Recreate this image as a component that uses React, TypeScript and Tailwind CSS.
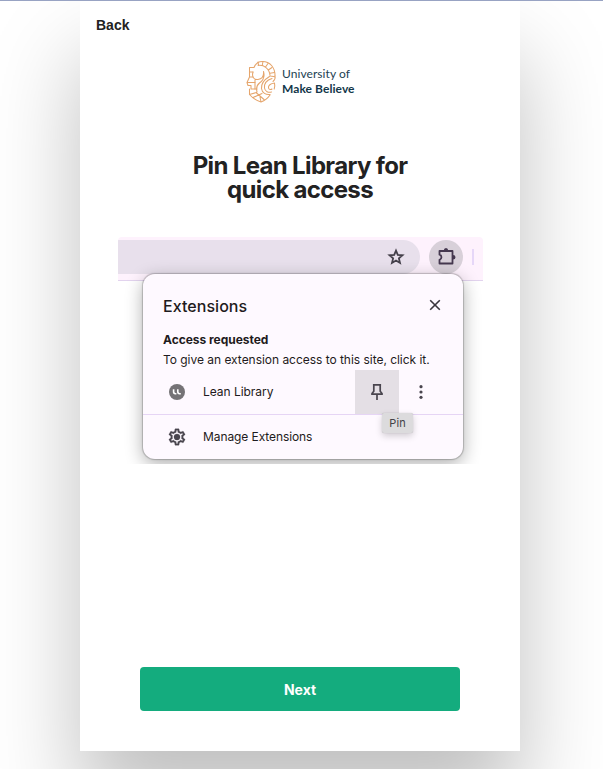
import React from "react";

function Crest() {
  return (
    <svg width="32" height="44" viewBox="0 0 32 44" fill="none" stroke="#e5a56c" strokeWidth="1.05" strokeLinejoin="round" strokeLinecap="round" className="shrink-0">
      <path d="M9 8.500H4.500v4.500H8M9 8.500C10.500 4.500 13.500 2.500 17.500 2.500c7.500 0 12.500 6 12.500 14" />
      <path d="M4.500 13v5H8M4.500 18L2 23.500h8M2 23.500l1 3h3v3.500h6M4.500 30v5.500c2.500 3 7 6 11.500 7.500 4-1.500 7-4 9-7M4.500 35.500l7-2M8 38.500l9-4M11 33.500l8 7M16 43l-1-5" />
      <path d="M13 6.500c6-1 11.500 3.500 12 10M13 2.900l.5 3.600M18 2.500l-.8 4M23 4.500l-2.500 3.500M27 8.500l-3.700 2.500M29.500 13.500l-4.500.8M25.300 17l4.500.8M30 17c.5 2-.3 4-2 5.500" />
      <path d="M8 13c-1.500 5 1 8 5 7.500 4-.6 6-3.500 5.500-8M10 21v9M18.500 12.500c1.500 5-.5 9-4 11.500-2.500 2-3.500 5-2.500 9" />
      <path d="M29.500 24c-4 .5-6.500 2.500-6 5 .4 1.800 2.500 1.800 3.500 1M27 19.500c-5 1.500-8 5-7.500 9.500.5 3.500 4 5 7 4M24.500 17.500c-5 3-8.500 7-8 12 .5 4.500 4.500 6.500 8.500 6M29.500 24c.5 2 .3 4-.3 6" />
    </svg>
  );
}

function StarIcon() {
  return (
    <svg width="18" height="18" viewBox="0 0 18 18" fill="none" stroke="#45414b" strokeWidth="1.8" strokeLinejoin="miter">
      <path d="M9 2.600l1.800 4.300 4.700.4-3.600 3.100 1.100 4.600L9 12.600 5 15l1.100-4.600-3.600-3.100 4.700-.4z" />
    </svg>
  );
}

function PuzzleIcon() {
  return (
    <svg width="20" height="20" viewBox="0 0 20 20">
      <path d="M3.500 4h13v12.500h-13v-3.700c2.600-.7 2.600-4.400 0-5.100z" fill="none" stroke="#45384f" strokeWidth="1.800" strokeLinejoin="round" />
      <path d="M7.800 3.500a2.200 2.500 0 0 1 4.400 0zM17 8a2.500 2.300 0 0 1 0 4.600z" fill="#45384f" />
    </svg>
  );
}

function CloseIcon() {
  return (
    <svg width="12" height="12" viewBox="0 0 12 12" stroke="#39353d" strokeWidth="1.600">
      <path d="M1.200 1.200l9.600 9.600M10.800 1.200l-9.600 9.600" />
    </svg>
  );
}

function LibraryIcon() {
  return (
    <svg width="16" height="16" viewBox="0 0 16 16">
      <circle cx="8" cy="8" r="8" fill="#757376" />
      <path d="M4.600 5.300v2.500c0 1.300.6 1.900 1.800 1.900h1M8.800 5.300v2.500c0 1.300.6 1.900 1.800 1.900h1.200" fill="none" stroke="#fff" strokeWidth="1.600" />
    </svg>
  );
}

function GearIcon() {
  return (
    <svg width="20" height="20" viewBox="0 0 24 24" fill="#49454e" stroke="#49454e" strokeWidth="0.3">
      <path d="M19.430 12.980c.04-.32.07-.64.07-.98 0-.34-.03-.66-.07-.98l2.110-1.650c.19-.15.24-.42.12-.64l-2-3.460c-.09-.16-.26-.25-.44-.25-.06 0-.12.01-.17.03l-2.490 1c-.52-.4-1.080-.73-1.690-.98l-.38-2.650C14.460 2.180 14.250 2 14 2h-4c-.25 0-.46.18-.49.42l-.38 2.650c-.61.25-1.170.59-1.690.98l-2.490-1c-.06-.02-.12-.03-.18-.03-.17 0-.34.09-.43.25l-2 3.460c-.13.22-.07.49.12.64l2.110 1.650c-.04.32-.07.65-.07.98 0 .33.03.66.07.98l-2.110 1.650c-.19.15-.24.42-.12.64l2 3.460c.09.16.26.25.44.25.06 0 .12-.01.17-.03l2.490-1c.52.4 1.080.73 1.690.98l.38 2.650c.03.24.24.42.49.42h4c.25 0 .46-.18.49-.42l.38-2.650c.61-.25 1.170-.59 1.690-.98l2.490 1c.06.02.12.03.18.03.17 0 .34-.09.43-.25l2-3.460c.12-.22.07-.49-.12-.64l-2.110-1.650zm-1.980-1.710c.04.31.05.52.05.73 0 .21-.02.43-.05.73l-.14 1.130.89.7 1.080.84-.7 1.210-1.270-.51-1.040-.42-.9.68c-.43.32-.84.56-1.250.73l-1.060.43-.16 1.130-.2 1.350h-1.400l-.19-1.350-.16-1.130-1.060-.43c-.43-.18-.83-.41-1.230-.71l-.91-.7-1.060.43-1.270.51-.7-1.210 1.080-.84.89-.7-.14-1.130c-.03-.31-.05-.54-.05-.74s.02-.43.05-.73l.14-1.130-.89-.7-1.080-.84.7-1.210 1.270.51 1.040.42.9-.68c.43-.32.84-.56 1.250-.73l1.060-.43.16-1.130.2-1.350h1.390l.19 1.350.16 1.130 1.060.43c.43.18.83.41 1.230.71l.91.7 1.060-.43 1.270-.51.7 1.210-1.070.85-.89.7.14 1.130z" />
      <circle cx="12" cy="12" r="3.700" />
    </svg>
  );
}

function PinIcon() {
  return (
    <svg width="14" height="18" viewBox="0 0 14 18" fill="none" stroke="#49454e" strokeWidth="1.700">
      <path d="M3.800 1.900v6.300L2 10.500v.7h10v-.7l-1.800-2.300V1.900M2.900 1.900h8.200M7 11v6" />
    </svg>
  );
}

function MoreIcon() {
  return (
    <svg width="4" height="14" viewBox="0 0 4 14" fill="#49454e">
      <circle cx="2" cy="1.700" r="1.600" />
      <circle cx="2" cy="7" r="1.600" />
      <circle cx="2" cy="12.300" r="1.600" />
    </svg>
  );
}

function ExtensionsMenu() {
  return (
    <div className="relative ml-[25px] -mt-[7px] h-[185px] w-[320px] rounded-[12px] bg-[#fef9ff] text-[#1e1b20] shadow-[0_0_1px_0.5px_rgba(0,0,0,0.2),0_5px_18px_rgba(0,0,0,0.32)]">
      <div className="flex h-[56px] items-end justify-between pr-[22px] pl-5">
        <h2 className="mb-[12px] text-[16px] leading-[24px] font-medium tracking-[0.05px]">Extensions</h2>
        <div className="mb-[19px]"><CloseIcon /></div>
      </div>
      <div className="h-[40px] pl-5">
        <p className="text-[12px] leading-[20px] font-bold tracking-[-0.03px]">Access requested</p>
        <p className="text-[12px] leading-[20px] whitespace-nowrap tracking-[-0.03px]">To give an extension access to this site, click it.</p>
      </div>
      <div className="flex h-[44px] items-center">
        <div className="ml-[26px] w-[34px]"><LibraryIcon /></div>
        <span className="w-[152px] text-[12px] tracking-[-0.04px]">Lean Library</span>
        <div className="flex h-[44px] w-[44px] items-center justify-center bg-[#e4dfe5]"><PinIcon /></div>
        <div className="flex w-[44px] justify-center"><MoreIcon /></div>
      </div>
      <div className="flex h-[45px] items-center border-t border-[#e6d5f5]">
        <div className="ml-[24px] w-[36px]"><GearIcon /></div>
        <span className="text-[12px] tracking-[-0.09px]">Manage Extensions</span>
      </div>
      <div className="absolute top-[139px] left-[239px] flex h-[20px] w-[31px] items-center justify-center rounded-[2px] bg-[#dcdbdd] text-[11px] tracking-[0.1px] text-[#444246] shadow-[0_0_1px_rgba(0,0,0,0.25),0_3px_7px_rgba(0,0,0,0.18)]">Pin</div>
    </div>
  );
}

function BrowserPreview() {
  return (
    <div className="ml-[38px] h-[227px] w-[365px] overflow-hidden rounded-t-[4px]">
      <div className="flex h-[44px] border-b border-[#e2d3ee] bg-[#fef2fd] pt-[3px]">
        <div className="flex h-[34px] w-[302px] items-center justify-end rounded-r-full bg-[#e8e0ec] pr-[15px]"><StarIcon /></div>
        <div className="ml-[9px] flex size-[34px] items-center justify-center rounded-full bg-[#d8d0d9]"><PuzzleIcon /></div>
        <div className="mt-[9px] ml-[9px] h-[16px] w-[2px] bg-[#e6d7f8]" />
      </div>
      <ExtensionsMenu />
    </div>
  );
}

export default function App() {
  return (
    <div className="h-[769px] w-[603px] overflow-hidden border-t border-[#98a3c3] bg-white font-['Inter',sans-serif]">
      <main className="ml-[80px] flex h-[750px] w-[440px] flex-col bg-white shadow-[0_56px_84px_rgba(0,0,0,0.25)]">
        <div className="h-[57px] pt-[14px] pl-4">
          <button className="block font-['Liberation_Sans',Arial,sans-serif] text-[14px] leading-[20px] font-bold text-[#222]">Back</button>
        </div>
        <div className="ml-[165px] flex h-[46px] items-center gap-[5px]">
          <Crest />
          <div className="font-['Lato',sans-serif] text-[12px] leading-[15px] tracking-[0.07px] whitespace-nowrap text-[#234252]">
            <p>University of</p>
            <p className="font-bold text-[#14384a]">Make Believe</p>
          </div>
        </div>
        <h1 className="mt-[50px] text-center text-[24px] leading-[24px] font-bold tracking-[-0.65px] text-[#222]">
          <span className="block">Pin Lean Library for</span>
          <span className="block">quick access</span>
        </h1>
        <div className="mt-[35px]"><BrowserPreview /></div>
        <button className="mx-auto mt-auto mb-[40px] h-[44px] w-[320px] rounded-[4px] bg-[#14ac7e] text-[14px] font-bold text-white">Next</button>
      </main>
    </div>
  );
}
